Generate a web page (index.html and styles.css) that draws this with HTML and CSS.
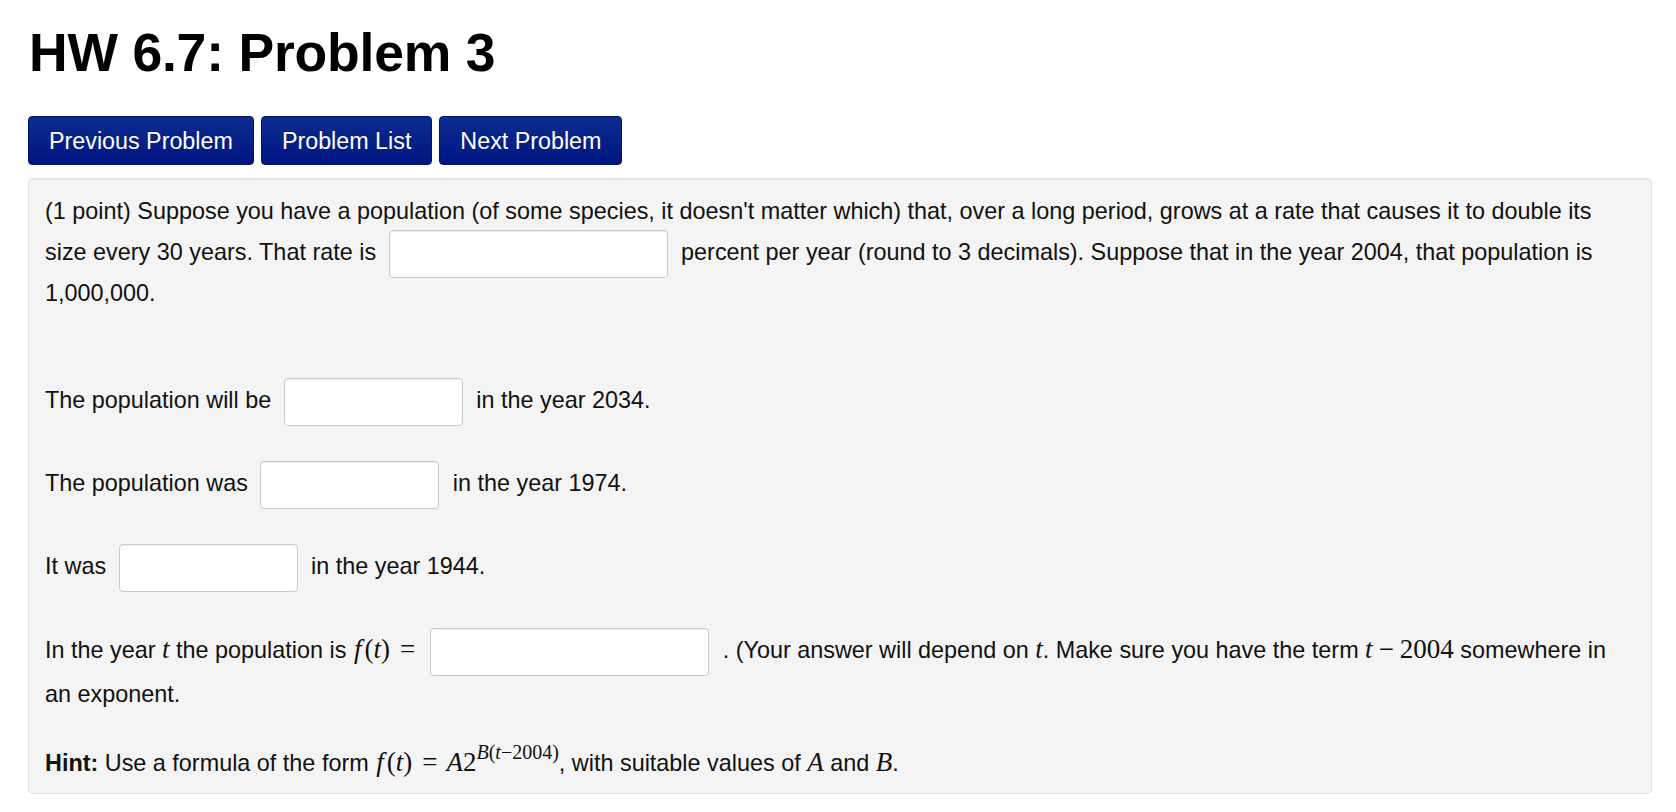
FILE: index.html
```html
<!DOCTYPE html>
<html lang="en">
<head>
<meta charset="utf-8">
<title>HW 6.7: Problem 3</title>
<link rel="stylesheet" href="styles.css">
</head>
<body>
<div class="page">
  <h1 class="title">HW 6.7: Problem 3</h1>
  <div class="nav">
    <a class="btn" href="#">Previous Problem</a>
    <a class="btn" href="#">Problem List</a>
    <a class="btn" href="#">Next Problem</a>
  </div>
  <div class="problem">
    <p class="para">(1 point) Suppose you have a population (of some species, it doesn't matter which) that, over a long period, grows at a rate that causes it to double its size every 30 years. That rate is <input class="ans ans-wide" type="text"> percent per year (round to 3 decimals). Suppose that in the year 2004, that population is 1,000,000.</p>
    <p class="para para-lg">The population will be <input class="ans" type="text"> in the year 2034.</p>
    <p class="para">The population was <input class="ans" type="text"> in the year 1974.</p>
    <p class="para">It was <input class="ans" type="text"> in the year 1944.</p>
    <p class="para para-ft">In the year <span class="math"><i>t</i></span> the population is <span class="math"><i class="fn">f</i>(<i>t</i>)<span class="rel">=</span></span><input class="ans ans-wide" type="text"> . (Your answer will depend on <span class="math"><i>t</i></span>. Make sure you have the term <span class="math"><i>t</i><span class="bin">&minus;</span>2004</span> somewhere in an exponent.</p>
    <p class="para para-hint"><b>Hint:</b> Use a formula of the form <span class="math"><i class="fn">f</i>(<i>t</i>)<span class="rel">=</span><i>A</i>2<sup class="sup"><i>B</i>(<i>t</i>&minus;2004)</sup></span>, with suitable values of <span class="math"><i>A</i></span> and <span class="math"><i>B</i></span>.</p>
  </div>
</div>
</body>
</html>
```

FILE: styles.css
```css
html, body {
  margin: 0;
  padding: 0;
  background: #ffffff;
}

body {
  font-family: "Liberation Sans", Arial, Helvetica, sans-serif;
  color: #111111;
}

.page {
  padding: 0 24px 0 28px;
}

.title {
  margin: 26px 0 0 1px;
  font-size: 53.5px;
  line-height: 54px;
  font-weight: bold;
  color: #000000;
  letter-spacing: -0.2px;
}

.nav {
  display: flex;
  gap: 7px;
  margin-top: 36px;
}

.btn {
  display: block;
  box-sizing: border-box;
  height: 49px;
  padding: 11px 20px 9px;
  font-size: 23.3px;
  line-height: 27px;
  color: #ffffff;
  text-decoration: none;
  background: linear-gradient(to bottom, #0c2d8f 0%, #001581 100%);
  border: 1px solid #02106a;
  border-radius: 4px;
  text-shadow: 0 -1px 0 rgba(0, 0, 0, 0.25);
  white-space: nowrap;
}

.problem {
  margin-top: 13px;
  padding: 12px 15px 9px 16px;
  background: #f4f4f4;
  border: 1px solid #e3e3e3;
  border-radius: 4px;
  box-shadow: inset 0 1px 1px rgba(0, 0, 0, 0.05);
  font-size: 23.4px;
  line-height: 41px;
}

.para {
  margin: 42px 0 0;
}

.para:first-child {
  margin-top: 0;
}

.para-lg {
  margin-top: 66px;
}

.para-ft {
  margin-top: 41px;
  line-height: 43.5px;
}

.para-hint {
  margin-top: 26px;
}

.ans {
  box-sizing: border-box;
  width: 179px;
  height: 48px;
  margin: -10px 7px -10px 6px;
  padding: 4px 8px;
  vertical-align: middle;
  background: #ffffff;
  border: 1px solid #c9c9c9;
  border-radius: 4px;
  box-shadow: inset 0 1px 1px rgba(0, 0, 0, 0.075);
  font: inherit;
}

.ans-wide {
  width: 279px;
}

.math {
  font-family: "Liberation Serif", "Times New Roman", serif;
  font-size: 27px;
  white-space: nowrap;
}

.math i {
  font-style: italic;
}

.fn {
  padding: 0 3px 0 1px;
}

.rel {
  padding: 0 9px 0 10px;
}

.bin {
  padding: 0 6px;
}

.sup {
  font-size: 20px;
  line-height: 0;
  vertical-align: 12px;
}
```
